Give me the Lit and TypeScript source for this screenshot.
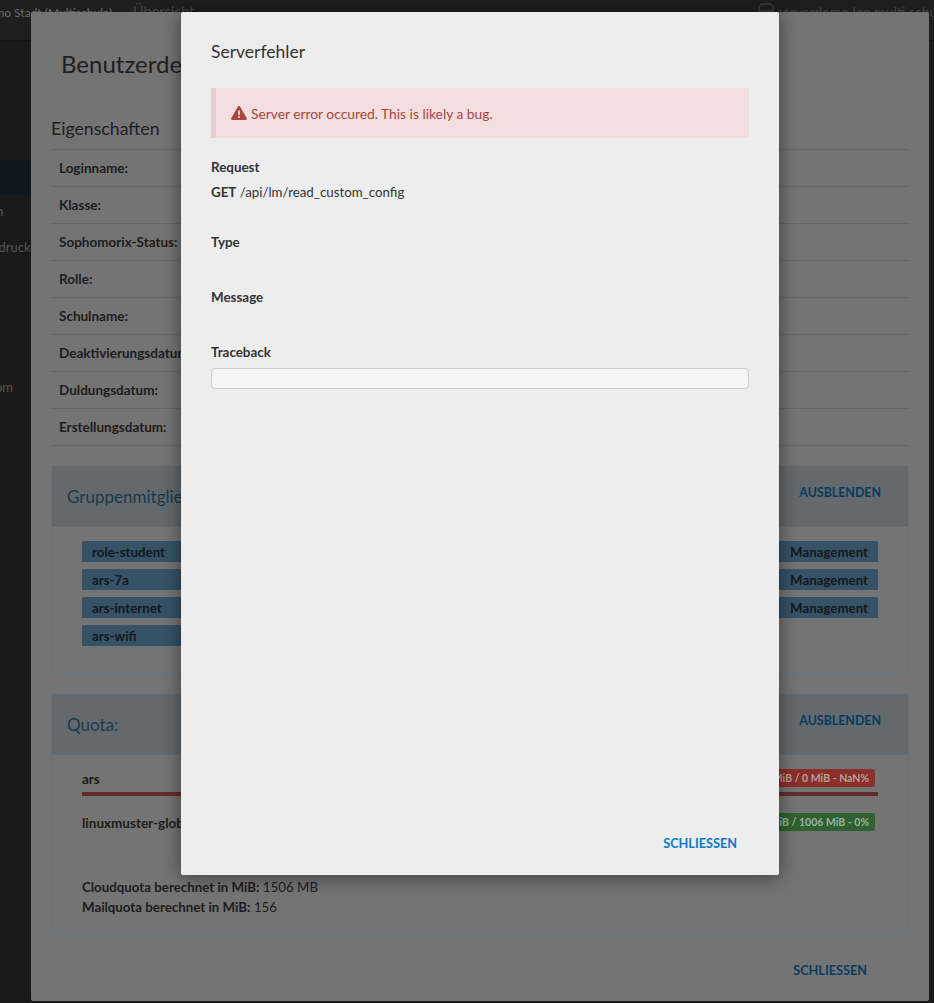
import { LitElement, html, css } from "lit";
import { customElement } from "lit/decorators.js";

const rows = ["Loginname:", "Klasse:", "Sophomorix-Status:", "Rolle:", "Schulname:", "Deaktivierungsdatum:", "Duldungsdatum:", "Erstellungsdatum:"];

@customElement("app-root")
export class AppRoot extends LitElement {
  static styles = css`
    :host { display: block; position: relative; width: 934px; height: 1003px; overflow: hidden; background: #1a1a1a; font-family: "Lato", "Noto Sans", sans-serif; font-size: 13.5px; color: #1d1d1d; }
    * { box-sizing: border-box; }
    .topbar { height: 41px; background: #1e1e1e; border-bottom: 1px solid #151515; display: flex; color: #555; font-size: 12px; white-space: nowrap; }
    .school { margin-left: -21px; width: 154px; padding-top: 5px; color: #6b6b6b; }
    .crumb { padding-top: 3px; font-size: 14.5px; color: #444; }
    .server { margin-left: auto; margin-right: -14px; padding-top: 3px; font-size: 14px; color: #404040; display: flex; gap: 3px; }
    .side { width: 31px; color: #555; overflow: hidden; white-space: nowrap; font-size: 13px; }
    .side-tick { height: 119px; }
    .side-active { height: 35px; background: #10181d; }
    .side-item { height: 36px; padding-top: 8px; }
    .side-item.indent { margin-left: -40px; }
    .side-item.print { margin-left: -23px; }
    .side-item.far { margin-top: 104px; margin-left: -20px; }
    .modal { position: absolute; top: 12px; border-radius: 2px; }
    .outer { left: 31px; width: 898px; height: 989px; background: #747474; padding: 0 20px; display: flex; flex-direction: column; }
    .outer h1 { margin: 36px 0 0 10px; font-size: 24px; line-height: 32px; font-weight: 400; color: #202020; white-space: nowrap; }
    .outer h2 { margin: 37px 0 0; font-size: 17.7px; line-height: 24px; font-weight: 400; color: #202020; }
    .table { margin-top: 8px; border-top: 1px solid #686868; }
    .row { height: 37px; border-bottom: 1px solid #686868; padding: 0 8px; display: flex; align-items: center; font-weight: 700; color: #1d1d1d; white-space: nowrap; }
    .panel { border: 1px solid #627680; border-radius: 2px; display: flex; flex-direction: column; }
    .groups { margin-top: 19px; height: 208px; }
    .quota { margin-top: 20px; height: 241px; }
    .head { height: 61px; flex: none; background: #63696c; border-bottom: 1px solid #5f6f77; padding: 0 27px 0 15px; display: flex; justify-content: space-between; align-items: center; }
    .head .title { font-size: 17px; color: #1a3a4c; }
    .link { font-weight: 700; font-size: 12.7px; color: #083c5e; }
    .head .link { margin-top: -7px; font-size: 12.4px; }
    .body { padding: 14px 30px 0; }
    .tags { display: grid; grid-template-columns: 1fr 99px; gap: 7px 0; }
    .tag { height: 21px; background: #355267; padding: 0 10px; display: flex; align-items: center; font-weight: 700; font-size: 13.3px; color: #14181b; }
    .tag.right { justify-content: flex-end; }
    .q { font-weight: 700; color: #1d1d1d; }
    .q-row { display: flex; justify-content: space-between; align-items: center; padding-right: 3px; height: 18px; }
    .q-row > span:first-child { padding-top: 2px; }
    .badge { height: 18px; border-radius: 3px; padding: 0 6px; font-size: 10.5px; font-weight: 700; display: flex; align-items: center; color: #b0a09e; }
    .badge.red { background: #8c2e2a; }
    .badge.green { background: #2f622f; color: #a0aea0; }
    .bar { height: 4px; background: #642d2b; margin-top: 5px; }
    .q2 { margin-top: 17px; }
    .sums { margin-top: 46px; line-height: 20px; color: #1d1d1d; font-size: 13.3px; }
    .sums b { font-weight: 700; }
    .outer-foot { display: flex; justify-content: flex-end; padding: 28px 42px 0 0; }
    .inner { left: 181px; width: 598px; height: 863px; background: #ededed; padding: 0 30px; box-shadow: 0 2px 18px rgba(0,0,0,.5); display: flex; flex-direction: column; color: #333; }
    .inner .title { margin-top: 28px; font-size: 17.5px; line-height: 24px; color: #333; }
    .alert { margin-top: 24px; height: 50px; background: #f2dede; border-left: 5px solid #ebcccc; padding-left: 15px; display: flex; align-items: center; gap: 4px; color: #a94442; font-size: 13.8px; }
    .alert svg { width: 16px; height: 14px; flex: none; }
    .label { font-weight: 700; line-height: 20px; color: #333; font-size: 13.4px; }
    .label.req { margin-top: 19px; }
    .value { margin-top: 5px; line-height: 20px; color: #333; font-size: 13.3px; }
    .value b { font-weight: 700; }
    .label.next { margin-top: 30px; }
    .label.trace { margin-top: 35px; }
    .pre { margin-top: 6px; height: 21px; background: #f5f5f5; border: 1px solid #ccc; border-radius: 4px; }
    .inner-foot { margin-top: auto; padding: 0 12px 24px 0; display: flex; justify-content: flex-end; }
    .inner-foot .link { color: #0a7cc4; }
  `;

  render() {
    return html`
      <div class="topbar">
        <div class="school">Demo Stadt (Multischule)</div>
        <div class="crumb">Übersicht</div>
        <div class="server">
          <svg width="16" height="16" viewBox="0 0 16 16" fill="none" stroke="#404040" stroke-width="1.4"><rect x="1" y="1" width="14" height="14" rx="4"/><path d="M1 8h14"/></svg>
          <span>serverdemo.lan multi schule</span>
        </div>
      </div>
      <div class="side">
        <div class="side-tick"></div>
        <div class="side-active"></div>
        <div class="side-item indent">Klassen</div>
        <div class="side-item print">Ausdrucken</div>
        <div class="side-item far">Zoom</div>
      </div>

      <div class="modal outer">
        <h1>Benutzerdetails</h1>
        <h2>Eigenschaften</h2>
        <div class="table">${rows.map((r) => html`<div class="row">${r}</div>`)}</div>
        <div class="panel groups">
          <div class="head"><span class="title">Gruppenmitgliedschaften</span><span class="link">AUSBLENDEN</span></div>
          <div class="body tags">
            <div class="tag">role-student</div><div class="tag right">Management</div>
            <div class="tag">ars-7a</div><div class="tag right">Management</div>
            <div class="tag">ars-internet</div><div class="tag right">Management</div>
            <div class="tag">ars-wifi</div>
          </div>
        </div>
        <div class="panel quota">
          <div class="head"><span class="title">Quota:</span><span class="link">AUSBLENDEN</span></div>
          <div class="body">
            <div class="q">
              <div class="q-row"><span>ars</span><span class="badge red">0 MiB / 0 MiB - NaN%</span></div>
              <div class="bar"></div>
            </div>
            <div class="q q2">
              <div class="q-row"><span>linuxmuster-global</span><span class="badge green">0 MiB / 1006 MiB - 0%</span></div>
            </div>
            <div class="sums">
              <div><b>Cloudquota berechnet in MiB:</b> 1506 MB</div>
              <div><b>Mailquota berechnet in MiB:</b> 156</div>
            </div>
          </div>
        </div>
        <div class="outer-foot"><span class="link">SCHLIESSEN</span></div>
      </div>

      <div class="modal inner">
        <div class="title">Serverfehler</div>
        <div class="alert">
          <svg viewBox="0 0 16 14"><path fill="#a94442" fill-rule="evenodd" d="M8 0c.5 0 .9.25 1.15.7l6.6 11.5c.5.85-.1 1.8-1.05 1.8H1.3c-.95 0-1.55-.95-1.05-1.8L6.85.7C7.1.25 7.5 0 8 0zM7 4.5l.25 4.6h1.5L9 4.5H7zM8 10a1.1 1.1 0 100 2.2A1.1 1.1 0 008 10z"/></svg>
          <span>Server error occured. This is likely a bug.</span>
        </div>
        <div class="label req">Request</div>
        <div class="value"><b>GET</b> /api/lm/read_custom_config</div>
        <div class="label next">Type</div>
        <div class="label trace">Message</div>
        <div class="label trace">Traceback</div>
        <div class="pre"></div>
        <div class="inner-foot"><span class="link">SCHLIESSEN</span></div>
      </div>
    `;
  }
}
